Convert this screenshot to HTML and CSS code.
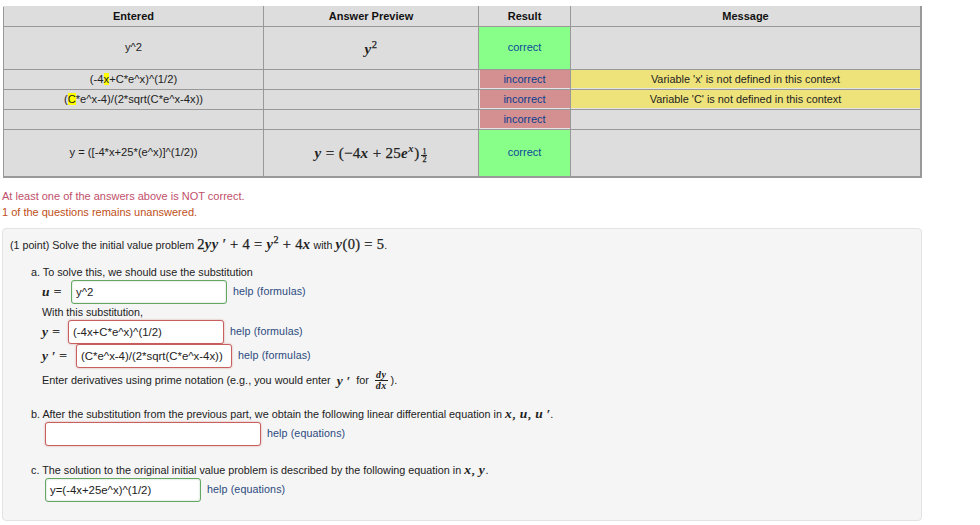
FILE: index.html
```html
<!DOCTYPE html>
<html lang="en">
<head>
<meta charset="utf-8">
<title>Answer results</title>
<link rel="stylesheet" href="styles.css">
</head>
<body>
<table class="results">
<colgroup><col class="c1"><col class="c2"><col class="c3"><col class="c4"></colgroup>
<thead><tr class="r-head"><th>Entered</th><th>Answer Preview</th><th>Result</th><th>Message</th></tr></thead>
<tbody>
<tr class="r-tall1"><td class="ent">y^2</td><td class="preview"><span class="m big"><i>y</i><sup>2</sup></span></td><td class="ok">correct</td><td></td></tr>
<tr class="r-s"><td class="ent">(-4<mark>x</mark>+C*e^x)^(1/2)</td><td></td><td class="bad">incorrect</td><td class="msg">Variable 'x' is not defined in this context</td></tr>
<tr class="r-s"><td class="ent">(<mark>C</mark>*e^x-4)/(2*sqrt(C*e^x-4x))</td><td></td><td class="bad">incorrect</td><td class="msg">Variable 'C' is not defined in this context</td></tr>
<tr class="r-s"><td></td><td></td><td class="bad">incorrect</td><td></td></tr>
<tr class="r-tall2"><td class="ent">y = ([-4*x+25*(e^x)]^(1/2))</td><td class="preview"><span class="m big"><i>y</i> = (−4<i>x</i> + 25<i>e</i><sup><i>x</i></sup>)<span class="pow"><span class="n">1</span><span class="d">2</span></span></span></td><td class="ok">correct</td><td></td></tr>
</tbody>
</table>
<div class="status">
<p class="s1">At least one of the answers above is NOT correct.</p>
<p class="s2">1 of the questions remains unanswered.</p>
</div>
<section class="problem">
<p class="intro">(1 point) Solve the initial value problem <span class="m mi">2<i>yy</i> ′ + 4 = <i>y</i><sup>2</sup> + 4<i>x</i></span> with <span class="m mi"><i>y</i>(0) = 5</span>.</p>
<div class="part pa">
<p class="lbl">a. To solve this, we should use the substitution</p>
<div class="sub">
<div class="row"><span class="m v v-u"><i>u</i> =</span><span class="field good w156">y^2</span><a class="help">help (formulas)</a></div>
<p class="plain">With this substitution,</p>
<div class="row"><span class="m v v-y"><i>y</i> =</span><span class="field wrong w156">(-4x+C*e^x)^(1/2)</span><a class="help">help (formulas)</a></div>
<div class="row"><span class="m v v-yp"><i>y</i> ′ =</span><span class="field wrong w156">(C*e^x-4)/(2*sqrt(C*e^x-4x))</span><a class="help">help (formulas)</a></div>
<p class="plain note">Enter derivatives using prime notation (e.g., you would enter <span class="m"><i>y</i> ′</span> for <span class="frac m"><span class="fn"><i>dy</i></span><span class="fd"><i>dx</i></span></span>).</p>
</div>
</div>
<div class="part pb">
<p class="lbl">b. After the substitution from the previous part, we obtain the following linear differential equation in <span class="m"><i>x</i>, <i>u</i>, <i>u</i> ′</span>.</p>
<div class="row in"><span class="field wrong w216"></span><a class="help">help (equations)</a></div>
</div>
<div class="part pc">
<p class="lbl">c. The solution to the original initial value problem is described by the following equation in <span class="m"><i>x</i>, <i>y</i></span>.</p>
<div class="row in"><span class="field good w156">y=(-4x+25e^x)^(1/2)</span><a class="help">help (equations)</a></div>
</div>
</section>
</body>
</html>
```
FILE: styles.css
```css
* { box-sizing: border-box; }
html, body { margin: 0; padding: 0; background: #fff; }
body { font-family: "Liberation Sans", Arial, sans-serif; font-size: 11px; color: #222; overflow: hidden; padding: 6px 0 0 3px; }
p { margin: 0; }
.results { width: 919px; height: 171px; border-collapse: collapse; table-layout: fixed; background: #ddd; text-align: center; border-right: 2px solid #999; border-bottom: 2px solid #999; border-left: 1px solid #999; }
.c1 { width: 260px; } .c2 { width: 215px; } .c3 { width: 92px; }
.results th, .results td { border: 1px solid #999; padding: 0 0 2px; vertical-align: middle; font-weight: normal; color: #222; }
.results th { font-weight: bold; color: #111; border-top: 1px solid #ddd; }
.results td.ent { font-size: 11.2px; }
.r-head { height: 20px; } .r-tall1 { height: 43px; } .r-s { height: 20px; } .r-tall2 { height: 47px; }
.results td.ok { background: #8f8; color: #0b4a9a; }
.results td.bad { background: #d49090; color: #0a3d8f; box-shadow: inset 0 -1px 0 #e4e4e4, inset 1px 0 0 #e4e4e4; }
.results td.msg { background: #eee27a; color: #222; font-size: 10.9px; box-shadow: inset 0 -1px 0 #e4e4e4; }
mark { background: #ff0; color: inherit; }
.results td.preview { padding: 3px 0 0; }
.m { font-family: "Liberation Serif", "Times New Roman", serif; font-style: normal; font-weight: normal; font-size: 13.5px; letter-spacing: .3px; color: #222; white-space: nowrap; -webkit-text-stroke: .25px #222; }
.m i { font-style: italic; font-weight: bold; letter-spacing: .6px; -webkit-text-stroke: 0; }
.m.big { font-size: 15px; }
.m.mi { font-size: 14.5px; }
sup { font-size: 70%; line-height: 0; vertical-align: 6px; }
.pow { display: inline-flex; flex-direction: column; align-items: center; font-size: 8px; line-height: 7px; vertical-align: 4px; margin-left: 2px; letter-spacing: 0; }
.pow .n { border-bottom: 1px solid #222; padding: 0 1px; }
.status { margin: 10px 0 0 -1px; line-height: 16px; }
.s1 { color: #c0506a; } .s2 { color: #c05020; }
.problem { width: 920px; height: 293px; margin: 8px 0 0 -1px; padding: 8px 7px; background: #f5f5f5; border: 1px solid #e3e3e3; border-radius: 4px; font-size: 10.7px; }
.intro { line-height: 15px; white-space: nowrap; }
.part { margin-left: 21px; }
.pa { margin-top: 12px; } .pb { margin-top: 15px; } .pc { margin-top: 16px; }
.lbl { line-height: 15px; white-space: nowrap; font-size: 10.8px; }
.sub { margin-left: 11px; }
.row { display: flex; align-items: center; height: 24px; }
.in { margin-left: 14px; }
.v { white-space: nowrap; }
.v-u { width: 29px; } .v-y { width: 26px; } .v-yp { width: 34px; }
.plain { line-height: 15px; margin: 1px 0 0; }
.note { margin-top: 3px; height: 20px; display: flex; align-items: center; gap: 3px; white-space: pre-wrap; font-size: 10.85px; }
.field { display: flex; align-items: center; height: 24px; padding: 0 4px; background: #fff; border: 1px solid #ccc; border-radius: 3px; white-space: nowrap; color: #222; font-size: 11.4px; }
.good { border-color: #63a763; box-shadow: inset 0 0 2px rgba(70,136,71,.4); }
.wrong { border-color: #c9605f; box-shadow: 0 0 2px rgba(185,74,72,.5); }
.w156 { width: 156px; } .w216 { width: 216px; }
.help { color: #2b4a7f; margin-left: 6px; letter-spacing: .1px; padding-bottom: 2px; }
.frac { display: inline-flex; flex-direction: column; align-items: center; font-size: 10px; line-height: 10px; }
.fn { border-bottom: 1px solid #222; padding: 0 1px; }
```
